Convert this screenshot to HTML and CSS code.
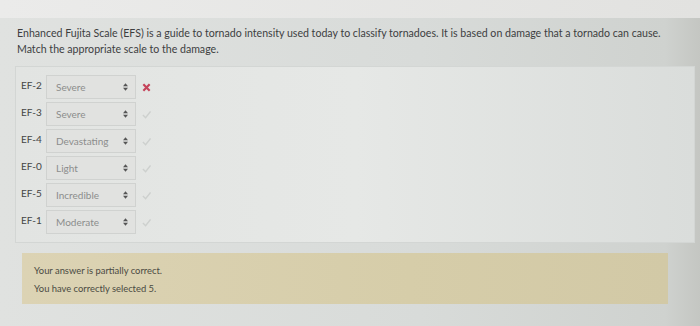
FILE: index.html
```html
<!DOCTYPE html>
<html>
<head>
<meta charset="utf-8">
<link rel="stylesheet" href="styles.css">
</head>
<body>
<div class="topstrip"></div>
<div class="page">
  <p class="question">Enhanced Fujita Scale (EFS) is a guide to tornado intensity used today to classify tornadoes. It is based on damage that a tornado can cause.<br>Match the appropriate scale to the damage.</p>
  <div class="matches">
    <div class="row">
      <span class="label">EF-2</span>
      <div class="select"><span>Severe</span><svg class="arrows" viewBox="0 0 6 9"><path d="M3 0 L6 3.5 H0 Z M3 9 L0 5.5 H6 Z"/></svg></div>
      <svg class="mark wrong" viewBox="0 0 10 10"><path d="M1.5 1.5 L8.5 8.5 M8.5 1.5 L1.5 8.5"/></svg>
    </div>
    <div class="row">
      <span class="label">EF-3</span>
      <div class="select"><span>Severe</span><svg class="arrows" viewBox="0 0 6 9"><path d="M3 0 L6 3.5 H0 Z M3 9 L0 5.5 H6 Z"/></svg></div>
      <svg class="mark ok" viewBox="0 0 10 10"><path d="M1 5.5 L4 8.5 L9.5 1.5"/></svg>
    </div>
    <div class="row">
      <span class="label">EF-4</span>
      <div class="select"><span>Devastating</span><svg class="arrows" viewBox="0 0 6 9"><path d="M3 0 L6 3.5 H0 Z M3 9 L0 5.5 H6 Z"/></svg></div>
      <svg class="mark ok" viewBox="0 0 10 10"><path d="M1 5.5 L4 8.5 L9.5 1.5"/></svg>
    </div>
    <div class="row">
      <span class="label">EF-0</span>
      <div class="select"><span>Light</span><svg class="arrows" viewBox="0 0 6 9"><path d="M3 0 L6 3.5 H0 Z M3 9 L0 5.5 H6 Z"/></svg></div>
      <svg class="mark ok" viewBox="0 0 10 10"><path d="M1 5.5 L4 8.5 L9.5 1.5"/></svg>
    </div>
    <div class="row">
      <span class="label">EF-5</span>
      <div class="select"><span>Incredible</span><svg class="arrows" viewBox="0 0 6 9"><path d="M3 0 L6 3.5 H0 Z M3 9 L0 5.5 H6 Z"/></svg></div>
      <svg class="mark ok" viewBox="0 0 10 10"><path d="M1 5.5 L4 8.5 L9.5 1.5"/></svg>
    </div>
    <div class="row">
      <span class="label">EF-1</span>
      <div class="select"><span>Moderate</span><svg class="arrows" viewBox="0 0 6 9"><path d="M3 0 L6 3.5 H0 Z M3 9 L0 5.5 H6 Z"/></svg></div>
      <svg class="mark ok" viewBox="0 0 10 10"><path d="M1 5.5 L4 8.5 L9.5 1.5"/></svg>
    </div>
  </div>
  <div class="feedback">
    <p>Your answer is partially correct.</p>
    <p>You have correctly selected 5.</p>
  </div>
</div>
</body>
</html>
```
FILE: styles.css
```css
html, body {
  margin: 0;
  padding: 0;
}
body {
  width: 700px;
  height: 326px;
  overflow: hidden;
  background: linear-gradient(to right, #e0e2e0 0%, #d8dbd9 60%, #cfd2cf 95%, #c4c6c2 100%);
  font-family: Lato, "Open Sans", sans-serif;
  color: #3c3c3c;
}
.topstrip {
  height: 18px;
  background: linear-gradient(to right, #ebebea, #e2e2e0);
}
.page {
  padding: 7px 0 0 17px;
}
.question {
  margin: 0;
  font-size: 10.6px;
  line-height: 16px;
  color: #3d3e3f;
}
.matches {
  margin: 9px 5px 0 -2px;
  padding: 8px 0 8px 5px;
  background: linear-gradient(to right, #e2e4e2, #e6e8e6 50%, #dadddb);
  border: 1px solid #d3d6d4;
  display: flex;
  flex-direction: column;
  gap: 3px;
}
.row {
  display: flex;
  align-items: center;
  height: 24px;
}
.label {
  width: 23px;
  font-size: 10px;
  color: #444;
  margin-right: 2px;
  margin-top: -4px;
}
.select {
  width: 72px;
  height: 22px;
  border: 1px solid #d0d2d0;
  background: #e1e2e0;
  display: flex;
  align-items: center;
  justify-content: space-between;
  padding: 0 7px 0 9px;
  font-size: 10px;
  color: #8c8d8c;
}
.arrows {
  width: 5px;
  height: 8px;
  fill: #555;
}
.mark {
  width: 9px;
  height: 9px;
  margin-left: 6px;
  fill: none;
}
.mark.wrong {
  stroke: #c5435a;
  stroke-width: 2.4;
}
.mark.ok {
  stroke: #cdd0ce;
  stroke-width: 1.6;
}
.feedback {
  margin: 10px 32px 0 5px;
  height: 51px;
  box-sizing: border-box;
  padding: 9px 12px;
  background: linear-gradient(to right, #dcd3b4, #d6cda9 60%, #d2c9a6);
}
.feedback p {
  margin: 0;
  font-size: 9.4px;
  line-height: 18px;
  color: #4a4a42;
}
```
